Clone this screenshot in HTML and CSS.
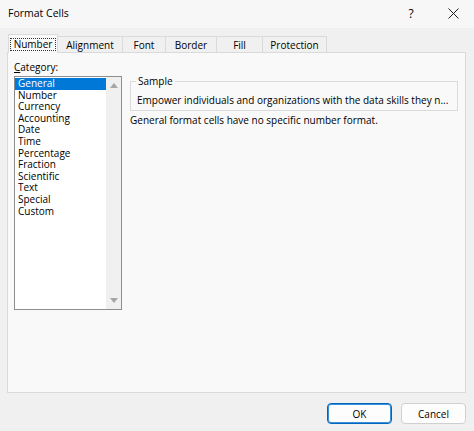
FILE: index.html
```html
<!DOCTYPE html>
<html>
<head>
<meta charset="utf-8">
<link rel="stylesheet" href="styles.css">
</head>
<body>
<div class="window">
  <div class="titlebar">
    <span class="title">Format Cells</span>
    <span class="cap-btn tb-help">?</span>
    <span class="cap-btn tb-close">
      <svg width="11" height="11" viewBox="0 0 11 11"><path d="M0.5 0.5 L10.5 10.5 M10.5 0.5 L0.5 10.5" stroke="#222" stroke-width="1" fill="none"/></svg>
    </span>
  </div>
  <div class="body">
    <div class="tabs">
      <div class="tab tab-active"><span class="focus">Number</span></div>
      <div class="tab t-align">Alignment</div>
      <div class="tab t-font">Font</div>
      <div class="tab t-border">Border</div>
      <div class="tab t-fill">Fill</div>
      <div class="tab t-prot">Protection</div>
    </div>
    <div class="panel">
      <div class="left">
        <div class="label"><u>C</u>ategory:</div>
        <div class="listbox">
          <ul class="items">
            <li class="sel">General</li>
            <li>Number</li>
            <li>Currency</li>
            <li>Accounting</li>
            <li>Date</li>
            <li>Time</li>
            <li>Percentage</li>
            <li>Fraction</li>
            <li>Scientific</li>
            <li>Text</li>
            <li>Special</li>
            <li>Custom</li>
          </ul>
          <div class="scrollbar">
            <svg class="arrow" width="8" height="5" viewBox="0 0 8 5"><path d="M0 5 L4 0 L8 5 Z" fill="#a6a6a6"/></svg>
            <svg class="arrow" width="8" height="5" viewBox="0 0 8 5"><path d="M0 0 L8 0 L4 5 Z" fill="#a6a6a6"/></svg>
          </div>
        </div>
      </div>
      <div class="right">
        <fieldset class="sample">
          <legend>Sample</legend>
          <div class="sample-text">Empower individuals and organizations with the data skills they n...</div>
        </fieldset>
        <div class="desc">General format cells have no specific number format.</div>
      </div>
    </div>
    <div class="footer">
      <button class="btn btn-default">OK</button>
      <button class="btn">Cancel</button>
    </div>
  </div>
</div>
</body>
</html>
```

FILE: styles.css
```css
html, body {
  margin: 0;
  padding: 0;
  background: #f0f0f0;
}
body {
  width: 474px;
  height: 431px;
  overflow: hidden;
  font-family: "Open Sans", "Noto Sans", sans-serif;
  font-size: 10px;
  color: #000;
}
.window {
  width: 474px;
  height: 431px;
  display: flex;
  flex-direction: column;
  background: #f0f0f0;
}
.titlebar {
  height: 28px;
  flex: 0 0 28px;
  display: flex;
  align-items: stretch;
  background: #f7f7f7;
  padding-left: 8px;
  box-sizing: border-box;
}
.title {
  font-size: 10.5px;
  flex: 1;
  display: flex;
  align-items: center;
  padding-bottom: 2px;
}
.cap-btn {
  width: 42px;
  flex: 0 0 42px;
  display: flex;
  align-items: center;
  justify-content: center;
  padding-bottom: 2px;
}
.tb-help {
  font-size: 12px;
}
.body {
  flex: 1;
  display: flex;
  flex-direction: column;
  padding: 6px 8px 0 7px;
}
.tabs {
  display: flex;
  height: 18px;
  align-items: flex-end;
  padding-left: 1px;
  position: relative;
  z-index: 1;
}
.tab {
  box-sizing: border-box;
  height: 16px;
  border: 1px solid #dadada;
  border-bottom: none;
  border-left: none;
  background: #f0f0f0;
  display: flex;
  align-items: center;
  justify-content: center;
  font-size: 10px;
}
.tab-active {
  width: 50px;
  height: 19px;
  margin-bottom: -1px;
  background: #f9f9f9;
  border-left: 1px solid #dadada;
}
.focus {
  border: 1px dotted #333;
  padding: 0 3px;
  line-height: 11px;
}
.t-align { width: 65px; }
.t-font { width: 43px; }
.t-border { width: 51px; }
.t-fill { width: 46px; }
.t-prot { width: 64px; }
.panel {
  box-sizing: border-box;
  height: 341px;
  border: 1px solid #dadada;
  background: #f9f9f9;
  display: flex;
  padding: 8px 7px 0 6px;
  gap: 8px;
}
.left {
  display: flex;
  flex-direction: column;
  width: 108px;
}
.label {
  height: 15px;
  line-height: 12px;
}
.label u {
  text-decoration-thickness: 1px;
  text-underline-offset: 1px;
}
.listbox {
  box-sizing: border-box;
  height: 234px;
  border: 1px solid #8e8e8e;
  background: #fff;
  display: flex;
}
.items {
  list-style: none;
  margin: 0;
  padding: 1px 0 0 0;
  flex: 1;
}
.items li {
  height: 11.6px;
  line-height: 11.6px;
  padding-left: 3px;
}
.items li.sel {
  background: #0078d7;
  color: #fff;
}
.scrollbar {
  width: 15px;
  background: #f0f0f0;
  display: flex;
  flex-direction: column;
  justify-content: space-between;
  align-items: center;
  padding: 6px 0 6px 0;
}
.right {
  flex: 1;
  display: flex;
  flex-direction: column;
  padding-top: 14px;
}
.sample {
  margin: 0;
  border: 1px solid #dadada;
  padding: 0 6px 3px 6px;
  min-width: 0;
}
.sample legend {
  padding: 0 2px;
  margin-left: -1px;
  line-height: 12px;
}
.sample-text {
  line-height: 14px;
  white-space: nowrap;
  padding-top: 6px;
}
.desc {
  margin-top: 3px;
  line-height: 12px;
}
.footer {
  display: flex;
  justify-content: flex-end;
  gap: 9px;
  padding-top: 10px;
}
.btn {
  width: 65px;
  height: 21px;
  box-sizing: border-box;
  border: 1px solid #d0d0d0;
  border-radius: 4px;
  background: #fdfdfd;
  font-family: "Open Sans", "Noto Sans", sans-serif;
  font-size: 10px;
  color: #000;
  padding: 0;
}
.btn-default {
  border: 1px solid #0067c0;
  box-shadow: inset 0 0 0 1px #3a8fd6;
}
```
